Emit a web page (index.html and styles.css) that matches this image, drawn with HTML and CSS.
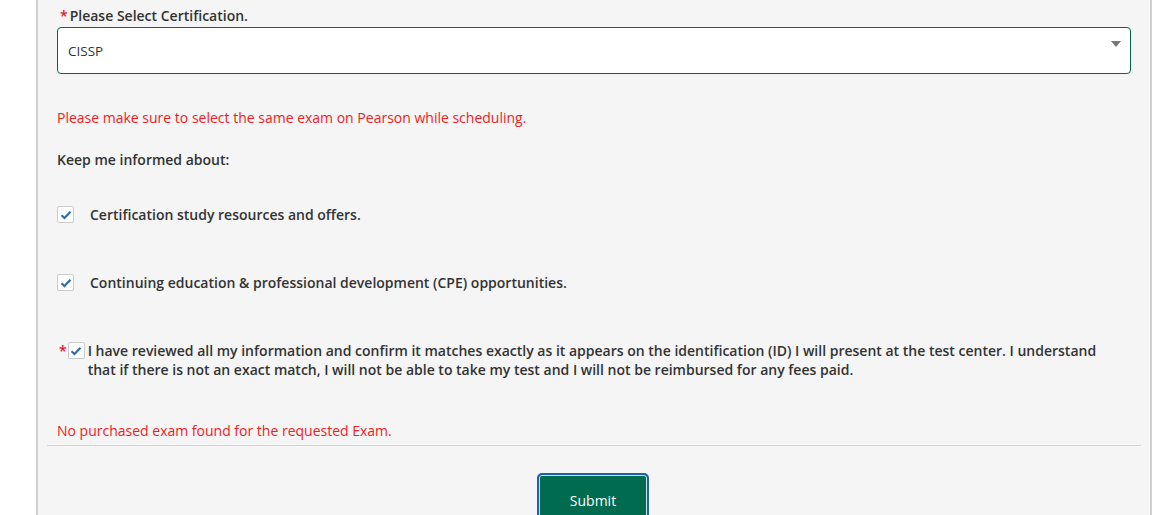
FILE: index.html
```html
<!DOCTYPE html>
<html lang="en">
<head>
<meta charset="utf-8">
<title>Certification</title>
<link rel="stylesheet" href="styles.css">
</head>
<body>
<div class="page">
  <div class="panel">
    <div class="field-label"><span class="req">*</span>Please Select Certification.</div>
    <div class="select">
      <span class="select-value">CISSP</span>
      <svg class="caret" width="10" height="6" viewBox="0 0 10 6"><path d="M0 0 H10 L5 6 Z" fill="#777"/></svg>
    </div>
    <p class="error first-error">Please make sure to select the same exam on Pearson while scheduling.</p>
    <p class="subhead">Keep me informed about:</p>
    <div class="check-row row-one">
      <span class="box"><svg width="12" height="10" viewBox="0 0 12 10"><path d="M1.5 5.2 L4.5 8 L10.5 1.8" fill="none" stroke="#2b6ea8" stroke-width="2.2"/></svg></span>
      <span class="check-text">Certification study resources and offers.</span>
    </div>
    <div class="check-row row-two">
      <span class="box"><svg width="12" height="10" viewBox="0 0 12 10"><path d="M1.5 5.2 L4.5 8 L10.5 1.8" fill="none" stroke="#2b6ea8" stroke-width="2.2"/></svg></span>
      <span class="check-text">Continuing education &amp; professional development (CPE) opportunities.</span>
    </div>
    <div class="check-row confirm-row">
      <span class="req">*</span>
      <span class="box"><svg width="12" height="10" viewBox="0 0 12 10"><path d="M1.5 5.2 L4.5 8 L10.5 1.8" fill="none" stroke="#2b6ea8" stroke-width="2.2"/></svg></span>
      <span class="check-text confirm-text">I have reviewed all my information and confirm it matches exactly as it appears on the identification (ID) I will present at the test center. I understand that if there is not an exact match, I will not be able to take my test and I will not be reimbursed for any fees paid.</span>
    </div>
    <p class="error last-error">No purchased exam found for the requested Exam.</p>
    <hr class="sep">
    <div class="actions">
      <button class="submit" type="button">Submit</button>
    </div>
  </div>
</div>
</body>
</html>
```
FILE: styles.css
```css
html, body {
  margin: 0;
  padding: 0;
  background: #ffffff;
  height: 515px;
  overflow: hidden;
}
body {
  font-family: "Open Sans", "Liberation Sans", sans-serif;
  font-size: 14px;
  line-height: 20px;
  color: #333333;
}
.page {
  padding-left: 36px;
}
.panel {
  width: 1074px;
  background: #f4f5f4;
  border-left: 2px solid #cfcfcf;
  border-right: 2px solid #cfcfcf;
  padding: 6px 19px 0 19px;
  height: 509px;
}
.req {
  color: #e8112d;
  font-weight: 600;
}
.field-label {
  font-weight: 600;
  display: flex;
  gap: 2px;
  padding-left: 3px;
}
.select {
  margin-top: 1px;
  height: 45px;
  background: #ffffff;
  border: 1.5px solid #00694f;
  border-radius: 4px;
  display: flex;
  align-items: center;
  justify-content: space-between;
  padding: 0 9px 0 10px;
}
.select-value {
  font-size: 13.5px;
}
.caret {
  margin-top: -13px;
}
.error {
  color: #ee1c25;
  margin: 0;
}
.first-error {
  margin-top: 34px;
}
.subhead {
  margin: 22px 0 0 0;
  font-weight: 600;
}
.check-row {
  display: flex;
  align-items: flex-start;
  font-weight: 600;
}
.row-one {
  margin-top: 35px;
}
.row-two {
  margin-top: 48px;
}
.confirm-row {
  margin-top: 48px;
  padding-left: 2px;
  line-height: 19px;
}
.box {
  width: 15px;
  height: 15px;
  border: 1px solid #cbcbcb;
  border-radius: 2px;
  background: #ffffff;
  display: flex;
  align-items: center;
  justify-content: center;
  flex: none;
  margin-top: 1px;
}
.check-text {
  margin-left: 16px;
}
.confirm-row .req {
  margin-right: 1px;
}
.confirm-row .box {
  margin-top: 1px;
}
.confirm-text {
  margin-left: 3px;
  padding-right: 20px;
}
.last-error {
  margin-top: 42px;
}
.sep {
  margin: 4px -10px 0 -10px;
  border: 0;
  border-top: 1px solid #d4d4d4;
  height: 0;
}
.actions {
  display: flex;
  justify-content: center;
  margin-top: 27px;
}
.submit {
  width: 112px;
  height: 56px;
  background: #006b4f;
  color: #ffffff;
  font-family: "Open Sans", "Liberation Sans", sans-serif;
  font-size: 14px;
  font-weight: 500;
  border: 2px solid #1c5eb0;
  border-radius: 5px;
  box-shadow: inset 0 0 0 1px #cfe3dc;
  padding: 0 0 2px 0;
  margin-right: 2px;
}
```
